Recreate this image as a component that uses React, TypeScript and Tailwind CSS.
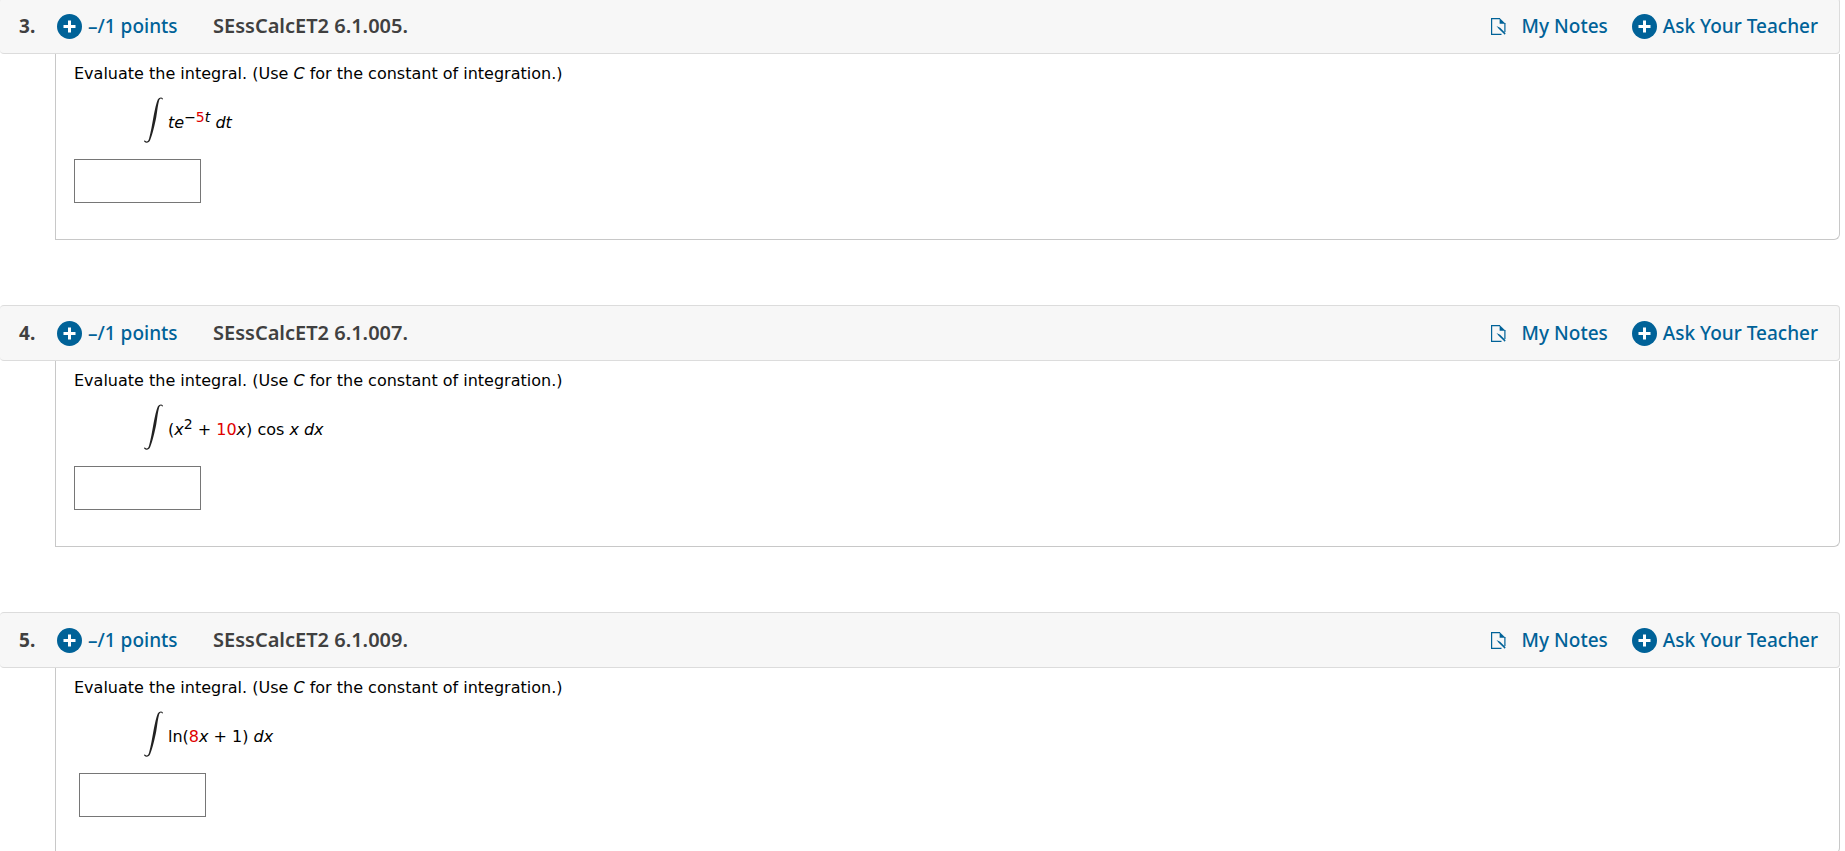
import type { ReactNode } from "react"

type Question = {
  number: number
  source: string
  formula: ReactNode
  indented?: boolean
}

const questions: Question[] = [
  {
    number: 3,
    source: "SEssCalcET2 6.1.005.",
    formula: (
      <>
        <i>te</i>
        <Sup>
          −<Value>5</Value>
          <i>t</i>
        </Sup>{" "}
        <i>dt</i>
      </>
    ),
  },
  {
    number: 4,
    source: "SEssCalcET2 6.1.007.",
    formula: (
      <>
        (<i>x</i>
        <Sup>2</Sup> + <Value>10</Value>
        <i>x</i>) cos <i>x</i> <i>dx</i>
      </>
    ),
  },
  {
    number: 5,
    source: "SEssCalcET2 6.1.009.",
    formula: (
      <>
        ln(<Value>8</Value>
        <i>x</i> + 1) <i>dx</i>
      </>
    ),
    indented: true,
  },
]

function Sup({ children }: { children: ReactNode }) {
  return <sup className="text-[14px] leading-none -top-1.5">{children}</sup>
}

function Value({ children }: { children: ReactNode }) {
  return <span className="text-[#e00000]">{children}</span>
}

function PlusIcon() {
  return (
    <svg viewBox="0 0 25 25" className="w-[25px] h-[25px] shrink-0" aria-hidden="true">
      <circle cx="12.5" cy="12.5" r="12.5" fill="#006298" />
      <path d="M12.5 6.5v12M6.5 12.5h12" stroke="#fff" strokeWidth="3" />
    </svg>
  )
}

function NotesIcon() {
  return (
    <svg viewBox="0 0 15 17" className="w-[15px] h-[17px] shrink-0" fill="none" aria-hidden="true">
      <path d="M9 .6H.6v15.8H10.5M13.9 5v9" stroke="#006298" strokeWidth="1.2" />
      <path d="M8.6 0L14.5 5.8H8.6z" fill="#006298" />
      <path d="M5.5 8l3.6 1.7 5.5 5.5-.8 1.6-5.9-5.7z" fill="#006298" />
    </svg>
  )
}

function IntegralSign() {
  return (
    <svg viewBox="0 0 19 46" className="w-[19px] h-[46px] shrink-0" role="img" aria-label="integral">
      <path
        d="M18.8 1.2C17.4-.2 15.1.2 13.8 2.6 12.3 5.8 11 12 9.7 18.5 8.2 27 6.8 35.5 5.1 41.5 4.5 43.7 3.6 44.9 2.3 44.5L.4 43.2.2 44.8C2.7 46.6 5 45.7 6.2 43 8.5 37.2 10.7 28.5 12.3 20 13.4 13.5 13.9 7.8 15.1 3.6 15.7 1.6 16.7 1.1 17.5 1.8L18.6 2.8z"
        fill="#222"
      />
    </svg>
  )
}

function QuestionHeader({ number, source }: Question) {
  return (
    <header className="flex flex-wrap items-center min-h-14 pl-[19px] pr-[21px] bg-[#f7f7f7] border-y border-r border-[#dcdcdc] rounded font-['Noto_Sans',sans-serif] text-[19px] leading-7">
      <span className="w-[38px] font-bold text-[#404040]">{number}.</span>
      <button className="flex items-center gap-1.5 w-[156px] font-medium text-[#006298]">
        <PlusIcon />
        –/1 points
      </button>
      <h2 className="text-[20px] font-semibold text-[#404040]">{source}</h2>
      <div className="flex items-center gap-6 ml-auto font-medium text-[#006298]">
        <button className="flex items-center gap-4">
          <NotesIcon />
          My Notes
        </button>
        <button className="flex items-center gap-1.5">
          <PlusIcon />
          Ask Your Teacher
        </button>
      </div>
    </header>
  )
}

function QuestionCard(question: Question) {
  const { number, formula, indented } = question

  return (
    <section>
      <QuestionHeader {...question} />
      <div className="ml-[55px] pt-2 pb-9 pl-[18px] bg-white border border-t-0 border-[#c8c8c8] rounded-br-md text-base text-black font-[Verdana,'DejaVu_Sans',sans-serif]">
        <p>
          Evaluate the integral. (Use <i>C</i> for the constant of integration.)
        </p>
        <div className="flex items-center gap-[5px] mt-[11px] pl-[70px]">
          <IntegralSign />
          <span className="pt-1.5 whitespace-nowrap">{formula}</span>
        </div>
        <input
          type="text"
          aria-label={`Answer to question ${number}`}
          className={`block mt-4 w-[127px] h-11 px-2 bg-white border border-[#767676] ${indented ? "ml-[5px]" : ""}`}
        />
      </div>
    </section>
  )
}

export default function App() {
  return (
    <div className="h-screen overflow-hidden bg-white">
      <main className="flex flex-col gap-[65px] -mt-0.5 pr-[5px]">
        {questions.map((question) => (
          <QuestionCard key={question.number} {...question} />
        ))}
      </main>
    </div>
  )
}
